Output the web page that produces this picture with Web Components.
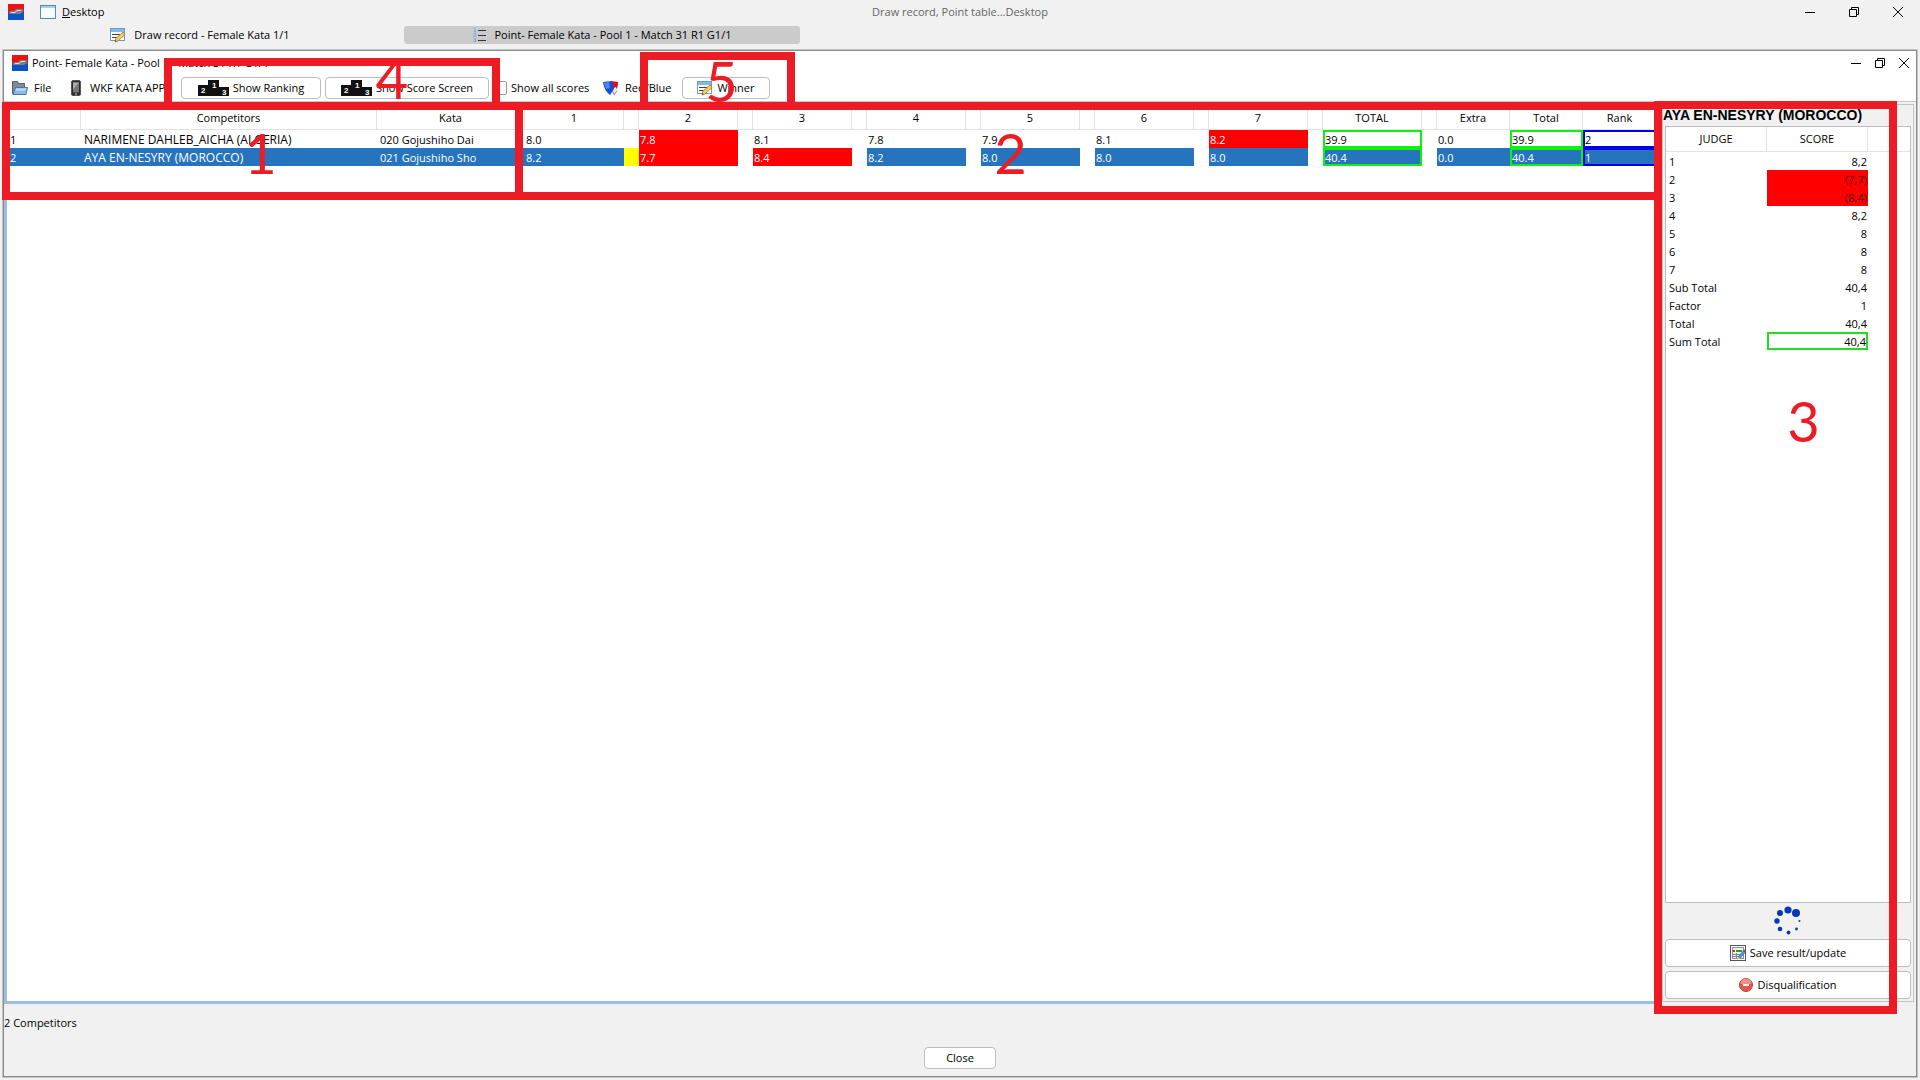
<!DOCTYPE html>
<html lang="en">
<head>
<meta charset="utf-8">
<title>Point table</title>
<style>
    body{
        margin: 0;
        background-color: #f1f1f1;
        color: #000;
        font-family: "Open Sans", "Noto Sans", sans-serif;
        font-size: 11px;
        line-height: 18px;
    }
</style>
</head>
<body>
<desktop-app></desktop-app>

<script>
const ICONS = {
    logo: `<svg viewBox="0 0 16 16" width="16" height="16">
        <path fill="#ee1111" d="M0 0h16v8H0z"/><path fill="#0f52c4" d="M0 8h16v8H0z"/>
        <path fill="#77808c" d="M1 8l2-1h3l2-2h7v3l-3 2H1z"/><path fill="#e4d9d6" d="M3 9h4l2-2h4V6H9L7 8H3z"/></svg>`,
    window: `<svg viewBox="0 0 16 14" width="16" height="14">
        <rect x=".5" y=".5" width="15" height="13" fill="#f8fbff" stroke="#5288c4"/><path fill="#a9cbee" d="M1 1h14v2H1z"/></svg>`,
    draw: `<svg viewBox="0 0 16 16" width="16" height="16">
        <rect x=".5" y="1.5" width="14" height="12" fill="#fff" stroke="#6a9bc9"/><path fill="#86b9e6" d="M1 2h13v3H1z"/>
        <path stroke="#444" d="M2 7.500h8M2 10.500h5"/>
        <path fill="#f4c968" stroke="#a57628" stroke-width=".8" d="M5 15l1-4 7-6 2 2.500-7 6.500z"/><path fill="#5c4934" d="M5 15l.5-2 1.200 1.500z"/></svg>`,
    list: `<svg viewBox="0 0 14 14" width="14" height="14">
        <g fill="#78a5d8" font-family="Liberation Sans" font-size="6" font-weight="700"><text x="0" y="4">1</text><text x="0" y="9">2</text><text x="0" y="14">3</text></g>
        <path stroke="#333" d="M5 2.500h8M5 7.500h8M5 12.500h8"/></svg>`,
    folder: `<svg viewBox="0 0 16 16" width="16" height="16">
        <path fill="#7f8b96" stroke="#53616e" d="M.5 13.500V1.500h5l1 2h6v10z"/><path fill="#8fbbe6" stroke="#3f77b3" d="M1 14.500l2.500-7h12l-1.500 7z"/><path fill="#c2dcf5" d="M4.200 8.500h10l-.5 2H3.500z"/></svg>`,
    phone: `<svg viewBox="0 0 16 16" width="16" height="16">
        <rect x="3.500" y=".5" width="9" height="15" rx="1.500" fill="#2a2a2a" stroke="#555"/><rect x="5" y="2.500" width="6" height="10" fill="#777"/>
        <path fill="#aaa" d="M5 2.500h6l-6 7z"/><path stroke="#ddd" d="M7 14h2"/></svg>`,
    podium: `<svg viewBox="0 0 31 16" width="31" height="16">
        <path fill="#111" d="M0 5h10V0h11v7h10v9H0z"/>
        <g fill="#fff" font-family="Liberation Sans" font-size="8" font-weight="700"><text x="3" y="13">2</text><text x="14" y="8">1</text><text x="24" y="15">3</text></g></svg>`,
    shield: `<svg viewBox="0 0 16 16" width="16" height="16">
        <path fill="#999" d="M10 13l5-3-4 6z"/><path fill="#d3141c" d="M8 1l7 1c0 5-1 8-5 12z"/><path fill="#ececec" d="M9 9l4-2 1 3-3 4z"/>
        <path fill="#1450d8" d="M0 2l9-1 2 8-4 6C3 12 1 8 0 2z"/><path fill="#4c86ee" d="M1 3l5-1 1 6-4 1z"/></svg>`,
    save: `<svg viewBox="0 0 16 16" width="16" height="16">
        <rect x=".5" y=".5" width="15" height="15" fill="#fff" stroke="#4f565c"/><rect x="2.500" y="2.500" width="11" height="11" fill="#eef0f2" stroke="#8b9298"/>
        <path fill="#e02020" d="M3 5h2v2H3z"/><path fill="#1ea530" d="M6 5h6v2H6z"/><path stroke="#888" d="M3 9.500h8M3 11.500h6M6.500 8v5"/>
        <path fill="#4a9ee2" stroke="#2b5f94" stroke-width=".6" d="M8 12l6-7 2 1.500-6 7z"/><path fill="#efc98c" d="M7 15l1-3 2 1.500z"/><path fill="#d42c2c" d="M13 6l1.500-1.500L16 6l-1 1.500z"/></svg>`,
    stop: `<svg viewBox="0 0 14 14" width="14" height="14">
        <circle cx="7" cy="7" r="6.500" fill="#e2574c" stroke="#b8443c"/><path fill="#f09087" d="M1.500 6a5.500 5.500 0 0 1 11 0z"/><path fill="#fff" d="M4 6h6v2H4z"/></svg>`,
    spinner: `<svg viewBox="0 0 28 30" width="28" height="30"><g fill="#0736b8">
        <circle cx="14" cy="4" r="3.600"/><circle cx="22" cy="7" r="4"/><circle cx="6" cy="7" r="3"/><circle cx="3" cy="15" r="2.700"/>
        <circle cx="6" cy="23" r="2.300"/><circle cx="14.500" cy="26.500" r="1.900"/><circle cx="22.500" cy="23" r="1.400"/><circle cx="25.500" cy="15" r="1"/></g></svg>`,
    minimize: `<svg viewBox="0 0 12 12" width="12" height="12"><path stroke="#000" d="M1 6.500h10"/></svg>`,
    restore: `<svg viewBox="0 0 12 12" width="12" height="12"><path fill="none" stroke="#000" d="M1.500 3.500h7v7h-7zM3.500 3V1.500h7v7H9"/></svg>`,
    close: `<svg viewBox="0 0 12 12" width="12" height="12"><path stroke="#000" d="M1 1l10 10M11 1L1 11"/></svg>`
};

class AppIcon extends HTMLElement
{
    constructor(){
        super();
        this.attachShadow({mode:"open"});
    }

    connectedCallback(){
        this.shadowRoot.innerHTML = `
        <style>
            :host{ display: inline-flex; flex: none; }
            svg{ display: block; }
        </style>
        ${ICONS[this.getAttribute("name")]}`;
    }
}

/* Button with an optional icon. Variants: box (bordered), plain, tab */
class AppButton extends HTMLElement
{
    constructor(){
        super();
        this.attachShadow({mode:"open"});
    }

    connectedCallback(){
        const icon = this.getAttribute("icon");
        const label = this.getAttribute("label");
        this.shadowRoot.innerHTML = `
        <style>
            :host{ display: block; }
            button{
                box-sizing: border-box;
                display: flex;
                align-items: center;
                justify-content: center;
                gap: 4px;
                width: 100%;
                height: 100%;
                margin: 0;
                padding: 0;
                border: none;
                background: none;
                color: inherit;
                font: inherit;
                white-space: nowrap;
            }
            :host([variant="box"]) button{
                border: 1px solid #bdbdbd;
                border-radius: 4px;
                background-color: #fff;
            }
            :host([variant="plain"]) button{
                justify-content: flex-start;
                gap: 6px;
            }
            :host([variant="tab"]) button{
                gap: 8px;
                border-radius: 3px;
            }
            :host([active]) button{ background-color: #cbcbcb; }
        </style>
        <button type="button" ${label ? `aria-label="${label}"` : ""}>
            ${icon ? `<app-icon name="${icon}"></app-icon>` : ""}<slot></slot>
        </button>`;
    }
}

class WindowControls extends HTMLElement
{
    constructor(){
        super();
        this.attachShadow({mode:"open"});
    }

    connectedCallback(){
        this.shadowRoot.innerHTML = `
        <style>
            :host{
                display: flex;
                gap: var(--controls-gap, 32px);
            }
        </style>
        <app-button icon="minimize" label="Minimize"></app-button>
        <app-button icon="restore" label="Restore"></app-button>
        <app-button icon="close" label="Close window"></app-button>`;
    }
}

class TitleBar extends HTMLElement
{
    constructor(){
        super();
        this.attachShadow({mode:"open"});
    }

    connectedCallback(){
        this.shadowRoot.innerHTML = `
        <style>
            :host{ display: block; }
            header{
                display: grid;
                grid-template-columns: 1fr auto 1fr;
                align-items: center;
                height: 24px;
                padding: 0 8px;
            }
            .left{
                display: flex;
                align-items: center;
                gap: 16px;
            }
            h1{
                margin: 0;
                color: #666;
                font-size: inherit;
                font-weight: 400;
            }
            window-controls{
                justify-self: end;
                margin-right: 8px;
            }
            nav{
                display: grid;
                grid-template-columns: 400px 396px;
                gap: 4px;
                height: 16px;
                padding: 2px 0 7px;
            }
        </style>
        <header>
            <div class="left">
                <app-icon name="logo"></app-icon>
                <app-button variant="plain" icon="window"><span><u>D</u>esktop</span></app-button>
            </div>
            <h1>Draw record, Point table...Desktop</h1>
            <window-controls></window-controls>
        </header>
        <nav>
            <app-button variant="tab" icon="draw">Draw record - Female Kata 1/1</app-button>
            <app-button variant="tab" icon="list" active>Point- Female Kata - Pool 1 - Match 31 R1 G1/1</app-button>
        </nav>`;
    }
}

class ToolBar extends HTMLElement
{
    constructor(){
        super();
        this.attachShadow({mode:"open"});
    }

    connectedCallback(){
        this.shadowRoot.innerHTML = `
        <style>
            :host{
                display: flex;
                align-items: center;
                gap: 4px;
                height: 26px;
                padding-left: 8px;
                border-bottom: 1px solid #c8c8c8;
            }
            app-button{ height: 22px; }
            .file{ width: 52px; }
            .api{ width: 109px; }
            .ranking{ width: 140px; }
            .screen{ width: 164px; }
            .sides{ width: 75px; }
            .winner{ width: 88px; }
            label{
                display: flex;
                align-items: center;
                gap: 4px;
                width: 106px;
                white-space: nowrap;
            }
            input{
                appearance: none;
                box-sizing: border-box;
                width: 14px;
                height: 14px;
                margin: 0;
                border: 1px solid #999;
                border-radius: 2px;
                background-color: #fff;
            }
        </style>
        <app-button class="file" variant="plain" icon="folder">File</app-button>
        <app-button class="api" variant="plain" icon="phone">WKF KATA APP</app-button>
        <app-button class="ranking" variant="box" icon="podium">Show Ranking</app-button>
        <app-button class="screen" variant="box" icon="podium">Show Score Screen</app-button>
        <label><input type="checkbox">Show all scores</label>
        <app-button class="sides" variant="plain" icon="shield">Red/Blue</app-button>
        <app-button class="winner" variant="box" icon="draw">Winner</app-button>`;
    }
}

class PointTable extends HTMLElement
{
    constructor(){
        super();
        this.attachShadow({mode:"open"});
        this.rows = [
            {
                who: ["1", "NARIMENE DAHLEB_AICHA (ALGERIA)", "020 Gojushiho Dai"],
                scores: ["8.0", "7.8", "8.1", "7.8", "7.9", "8.1", "8.2"],
                dropped: [1, 6],
                totals: ["39.9", "0.0", "39.9", "2"]
            },
            {
                who: ["2", "AYA EN-NESYRY (MOROCCO)", "021 Gojushiho Sho"],
                scores: ["8.2", "7.7", "8.4", "8.2", "8.0", "8.0", "8.0"],
                dropped: [1, 2],
                totals: ["40.4", "0.0", "40.4", "1"],
                selected: true,
                flag: 0
            }
        ];
    }

    getRow(row){
        const scores = row.scores.map((score, i) => `
            <td class="${row.dropped.includes(i) ? "dropped" : ""}">${score}</td>
            <td class="gap ${row.flag === i ? "flag" : ""}"></td>`).join("");
        const [num, name, kata] = row.who;
        const [total, extra, sum, rank] = row.totals;

        return `
        <tr class="${row.selected ? "selected" : ""}">
            <td class="who">${num}</td><td class="who person">${name}</td><td class="who">${kata}</td>
            ${scores}
            <td class="total">${total}</td><td class="gap"></td>
            <td>${extra}</td><td class="total">${sum}</td><td class="rank">${rank}</td>
        </tr>`;
    }

    connectedCallback(){
        const judges = [1, 2, 3, 4, 5, 6, 7];
        this.shadowRoot.innerHTML = `
        <style>
            :host{
                display: block;
                border: 3px solid #9bbfe3;
                background-color: #fff;
            }
            table{
                width: 100%;
                table-layout: fixed;
                border-collapse: separate;
                border-spacing: 0;
            }
            th{
                box-sizing: border-box;
                height: 25px;
                padding: 2px 0 0;
                border-right: 1px solid #e2e2e2;
                border-bottom: 1px solid #e2e2e2;
                font-weight: 400;
            }
            td{
                box-sizing: border-box;
                height: 18px;
                padding: 2px 1px 0;
                line-height: 12px;
                white-space: nowrap;
            }
            .who{ padding-left: 3px; }
            .person{ font-size: 12px; }
            .selected td:not(.gap){
                background-color: #2674be;
                color: #fff;
            }
            .selected td.dropped:not(.gap),
            .dropped{
                background-color: #f00;
                color: #fff;
            }
            .flag{ background-color: #ff0; }
            .total{ border: 2px solid #0cf20c; padding: 2px 0 0; }
            .rank{ border: 2px solid #0000e6; padding: 2px 0 0; }
            .num{ width: 74px; }
            .name{ width: 296px; }
            .kata{ width: 148px; }
            .score{ width: 99px; }
            .space{ width: 15px; }
            .small{ width: 73px; }
        </style>
        <table>
            <colgroup>
                <col class="num"><col class="name"><col class="kata">
                ${judges.map(() => `<col class="score"><col class="space">`).join("")}
                <col class="score"><col class="space">
                <col class="small"><col class="small"><col>
            </colgroup>
            <thead>
                <tr>
                    <th></th><th>Competitors</th><th>Kata</th>
                    ${judges.map(judge => `<th>${judge}</th><th></th>`).join("")}
                    <th>TOTAL</th><th></th><th>Extra</th><th>Total</th><th>Rank</th>
                </tr>
            </thead>
            <tbody>${this.rows.map(row => this.getRow(row)).join("")}</tbody>
        </table>`;
    }
}

class JudgePanel extends HTMLElement
{
    constructor(){
        super();
        this.attachShadow({mode:"open"});
        this.lines = [
            ["1", "8,2"], ["2", "(7,7)", "dropped"], ["3", "(8,4)", "dropped"], ["4", "8,2"],
            ["5", "8"], ["6", "8"], ["7", "8"],
            ["Sub Total", "40,4"], ["Factor", "1"], ["Total", "40,4"], ["Sum Total", "40,4", "sum"]
        ];
    }

    connectedCallback(){
        this.shadowRoot.innerHTML = `
        <style>
            :host{
                box-sizing: border-box;
                display: flex;
                flex-direction: column;
                gap: 4px;
                padding: 0 2px 2px;
                border: 1px solid #c4c4c4;
            }
            h2{
                margin: 0 0 -4px -2px;
                font: 700 14px/21px "Liberation Sans", Arial, sans-serif;
                white-space: nowrap;
            }
            .list{
                flex: 1;
                border: 1px solid #bdbdbd;
                background-color: #fff;
            }
            table{
                width: 100%;
                table-layout: fixed;
                border-collapse: separate;
                border-spacing: 0;
            }
            th{
                box-sizing: border-box;
                height: 25px;
                padding: 0;
                border-right: 1px solid #e2e2e2;
                border-bottom: 1px solid #e2e2e2;
                font-weight: 400;
            }
            th:last-child{ border-right: none; }
            .col{ width: 101px; }
            td{
                box-sizing: border-box;
                height: 18px;
                padding: 2px 1px 0 3px;
                line-height: 12px;
            }
            td:nth-child(2){ text-align: right; }
            .dropped{ background-color: #f00; color: #500; }
            .sum{ border: 2px solid #1fe01f; padding: 2px 0 0; }
            .busy{
                display: flex;
                align-items: center;
                justify-content: center;
                height: 28px;
            }
            app-button{ height: 28px; }
        </style>
        <h2>AYA EN-NESYRY (MOROCCO)</h2>
        <div class="list">
            <table>
                <colgroup><col class="col"><col class="col"><col></colgroup>
                <thead><tr><th>JUDGE</th><th>SCORE</th><th></th></tr></thead>
                <tbody>
                    ${this.lines.map(([name, value, kind = ""]) => `<tr><td>${name}</td><td class="${kind}">${value}</td><td></td></tr>`).join("")}
                </tbody>
            </table>
        </div>
        <div class="busy"><app-icon name="spinner"></app-icon></div>
        <app-button variant="box" icon="save">Save result/update</app-button>
        <app-button variant="box" icon="stop">Disqualification</app-button>`;
    }
}

class PointWindow extends HTMLElement
{
    constructor(){
        super();
        this.attachShadow({mode:"open"});
    }

    connectedCallback(){
        this.shadowRoot.innerHTML = `
        <style>
            :host{
                display: flex;
                flex-direction: column;
                border: 1px solid #c4c4c4;
            }
            .frame{
                flex: 1;
                display: flex;
                flex-direction: column;
                border: 1px solid #8a8a8a;
            }
            .head{ background-color: #fff; }
            header{
                display: flex;
                align-items: center;
                gap: 4px;
                height: 24px;
                padding: 0 6px 0 8px;
            }
            window-controls{
                --controls-gap: 12px;
                margin-left: auto;
            }
            main{
                flex: 1;
                display: grid;
                grid-template-columns: 1fr 252px;
                gap: 2px;
                padding-right: 2px;
            }
            judge-panel{ margin: 2px 0; }
            .count{
                margin: 0;
                padding: 10px 0 8px;
            }
            footer{
                display: flex;
                justify-content: center;
                padding: 7px 0;
            }
            footer app-button{ width: 72px; height: 22px; }
        </style>
        <div class="frame">
            <div class="head">
                <header>
                    <app-icon name="logo"></app-icon>
                    <span>Point- Female Kata - Pool 1 - Match 31 R1 G1/1</span>
                    <window-controls></window-controls>
                </header>
                <tool-bar></tool-bar>
            </div>
            <main>
                <point-table></point-table>
                <judge-panel></judge-panel>
            </main>
            <p class="count">2 Competitors</p>
            <footer><app-button variant="box">Close</app-button></footer>
        </div>`;
    }
}

/* Red numbered frame that lies over a part of the window */
class CalloutFrame extends HTMLElement
{
    constructor(){
        super();
        this.attachShadow({mode:"open"});
    }

    connectedCallback(){
        this.shadowRoot.innerHTML = `
        <style>
            :host{
                position: absolute;
                box-sizing: border-box;
                display: flex;
                align-items: center;
                justify-content: center;
                border: 8px solid #ed1c24;
                color: #ed1c24;
                font: 56px/56px Lato, sans-serif;
                pointer-events: none;
            }
        </style>
        <slot></slot>`;
    }
}

class DesktopApp extends HTMLElement
{
    constructor(){
        super();
        this.attachShadow({mode:"open"});
    }

    connectedCallback(){
        this.shadowRoot.innerHTML = `
        <style>
            :host{
                position: relative;
                display: flex;
                flex-direction: column;
                min-height: 100vh;
            }
            point-window{
                flex: 1;
                margin: 0 2px 2px;
            }
            .names{ left: 2px; top: 102px; width: 521px; height: 98px; }
            .scores{ left: 515px; right: 258px; top: 102px; height: 98px; }
            .judges{ right: 23px; top: 101px; bottom: 66px; width: 243px; }
            .shows{ left: 164px; top: 58px; width: 336px; height: 52px; }
            .win{ left: 640px; top: 52px; width: 155px; height: 58px; }
            .judges{ align-items: flex-start; padding-top: 284px; padding-left: 56px; }
            .shows{ padding-left: 120px; padding-bottom: 12px; }
            .win{ padding-left: 8px; }
            .names{ padding-top: 4px; padding-right: 4px; }
            .scores{ padding-top: 4px; padding-right: 156px; }
        </style>
        <title-bar></title-bar>
        <point-window></point-window>
        <callout-frame class="names">1</callout-frame>
        <callout-frame class="scores">2</callout-frame>
        <callout-frame class="shows">4</callout-frame>
        <callout-frame class="win">5</callout-frame>
        <callout-frame class="judges">3</callout-frame>`;
    }
}

customElements.define('app-icon',AppIcon);
customElements.define('app-button',AppButton);
customElements.define('window-controls',WindowControls);
customElements.define('title-bar',TitleBar);
customElements.define('tool-bar',ToolBar);
customElements.define('point-table',PointTable);
customElements.define('judge-panel',JudgePanel);
customElements.define('point-window',PointWindow);
customElements.define('callout-frame',CalloutFrame);
customElements.define('desktop-app',DesktopApp);
</script>
</body>
</html>
